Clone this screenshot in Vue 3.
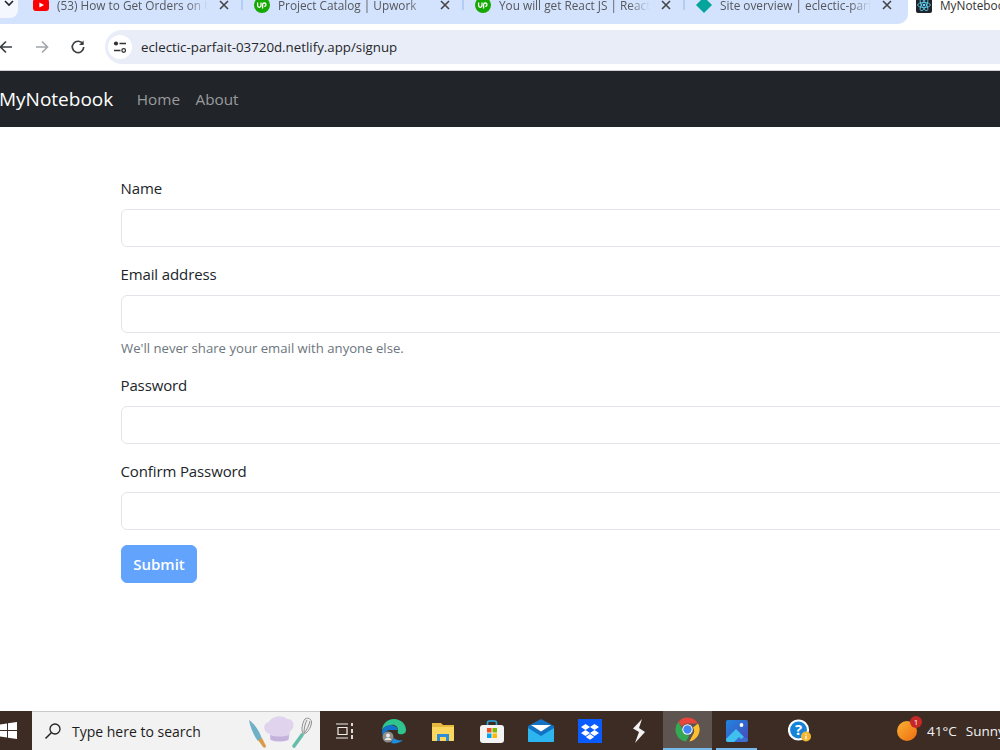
<script setup>
const tabs = [
  { title: '(53) How to Get Orders on Upwork', icon: 'yt' },
  { title: 'Project Catalog | Upwork', icon: 'up' },
  { title: 'You will get React JS | React Developer', icon: 'up' },
  { title: 'Site overview | eclectic-parfait', icon: 'net' },
]
const fields = [
  { label: 'Name' },
  { label: 'Email address', help: "We'll never share your email with anyone else." },
  { label: 'Password' },
  { label: 'Confirm Password' },
]
</script>

<template>
  <div class="screen">
    <div class="tabstrip">
      <div class="tabmenu">
        <svg width="12" height="10" viewBox="0 0 12 10"><path d="M2 1l4 4 4-4" fill="none" stroke="#222" stroke-width="1.6"/></svg>
      </div>
      <div class="tabs">
        <div v-for="(t, i) in tabs" :key="i" class="tab" :class="{ first: i === 0 }">
          <svg v-if="t.icon === 'yt'" class="fav" viewBox="0 0 16 16">
            <rect y="2" width="16" height="12" rx="3" fill="#f00"/>
            <path d="M6.4 5.4v5.2L11 8z" fill="#fff"/>
          </svg>
          <svg v-else-if="t.icon === 'up'" class="fav" viewBox="0 0 16 16">
            <circle cx="8" cy="8" r="8" fill="#14a800"/>
            <path d="M3.6 5.6v3a1.7 1.7 0 0 0 3.4 0v-3M8.6 11.6V7.4a1.7 1.7 0 1 1 1.6 2" fill="none" stroke="#fff" stroke-width="1.3"/>
          </svg>
          <svg v-else class="fav" viewBox="0 0 16 16">
            <path d="M8 0l8 8-8 8-8-8z" fill="#05a59c"/>
          </svg>
          <span class="tabtitle">{{ t.title }}</span>
          <svg class="close" viewBox="0 0 10 10"><path d="M1 1l8 8M9 1l-8 8" stroke="#444" stroke-width="1.6"/></svg>
        </div>
      </div>
      <div class="activetab">
        <svg class="fav" viewBox="0 0 16 16">
          <rect width="16" height="16" rx="2" fill="#20232a"/>
          <circle cx="8" cy="8" r="1.3" fill="#61dafb"/>
          <g fill="none" stroke="#61dafb" stroke-width=".8">
            <ellipse cx="8" cy="8" rx="6.4" ry="2.5"/>
            <ellipse cx="8" cy="8" rx="6.4" ry="2.5" transform="rotate(60 8 8)"/>
            <ellipse cx="8" cy="8" rx="6.4" ry="2.5" transform="rotate(120 8 8)"/>
          </g>
        </svg>
        <span class="activetitle">MyNotebook</span>
      </div>
    </div>

    <div class="toolbar">
      <svg class="tool back" viewBox="0 0 16 16"><path d="M14 8H2.5M8 2.5L2.5 8 8 13.5" fill="none" stroke="#3c4043" stroke-width="1.7"/></svg>
      <svg class="tool fwd" viewBox="0 0 16 16"><path d="M2 8h11.5M8 2.5L13.5 8 8 13.5" fill="none" stroke="#a3a6ab" stroke-width="1.7"/></svg>
      <svg class="tool reload" viewBox="0 0 16 16"><path d="M13 5.2A5.7 5.7 0 1 0 13.7 8" fill="none" stroke="#3c4043" stroke-width="1.7"/><path d="M13.6 1.4v4.6H9z" fill="#3c4043"/></svg>
      <div class="omnibox">
        <span class="siteinfo">
          <svg width="14" height="14" viewBox="0 0 14 14">
            <circle cx="3" cy="3.500" r="2.100" fill="#333"/>
            <path d="M6.500 3.500H13M1 10.500h6.500" stroke="#333" stroke-width="1.500"/>
            <circle cx="10.700" cy="10.500" r="1.800" fill="none" stroke="#333" stroke-width="1.300"/>
          </svg>
        </span>
        <span class="url">eclectic-parfait-03720d.netlify.app/signup</span>
      </div>
    </div>

    <nav class="navbar">
      <a class="brand">MyNotebook</a>
      <a class="navlink">Home</a>
      <a class="navlink">About</a>
    </nav>

    <main class="page">
      <form class="form" @submit.prevent>
        <div v-for="f in fields" :key="f.label" class="field">
          <label class="label">{{ f.label }}</label>
          <input class="input" type="text" />
          <div v-if="f.help" class="help">{{ f.help }}</div>
        </div>
        <button class="submit" type="submit">Submit</button>
      </form>
    </main>

    <footer class="taskbar">
      <div class="start">
        <svg width="17" height="17" viewBox="0 0 17 17"><path d="M0 2.4l7-1v6.500H0zM8 1.300L17 0v7.900H8zM0 9h7v6.500l-7-1zM8 9h9v8l-9-1.300z" fill="#fff"/></svg>
      </div>
      <div class="search">
        <svg class="lens" width="18" height="18" viewBox="0 0 18 18"><circle cx="11" cy="7" r="5" fill="none" stroke="#222" stroke-width="1.3"/><path d="M7.300 10.700L1.500 16.500" stroke="#222" stroke-width="1.500"/></svg>
        <span class="searchtext">Type here to search</span>
        <svg class="chef" width="66" height="36" viewBox="0 0 66 36">
          <path d="M0 7c5 3 11 12 13 19l-4 2C5 23 1 14 0 7z" fill="#6fb0c8"/>
          <path d="M9 27l4-2 4 8c.5 1.500-2 2.500-3 1z" fill="#d99a4a"/>
          <path d="M21 21c-7-1-8-11-1-12 2-6 14-8 18-3 7-1 9 9 3 12l-1 7c-6 2-13 2-18 0z" fill="#e0d3ee"/>
          <path d="M21 22c6 2 13 2 19 0l-.5 5c-6 2-12 2-18 0z" fill="#c4b2dc"/>
          <path d="M56 6c3-2 7 0 6.500 4-.5 5-5 11-8 11-3-3-1-12 1.500-15zM58 7c-2 3-3 9-3 13M61 8c-1 4-3 9-6 12" fill="#efeef0" stroke="#8e8e8e" stroke-width="1"/>
          <path d="M53 22l-8 11" stroke="#63bda9" stroke-width="3.600" stroke-linecap="round"/>
        </svg>
      </div>
      <div class="taskitems">
        <div class="cell">
          <svg width="18" height="16" viewBox="0 0 18 16" fill="none" stroke="#eee" stroke-width="1.200"><path d="M0 1h12M0 15h12"/><path d="M2 4.500h9v7H2z"/><path d="M16 0v3M16 6v4M16 12v4" stroke-width="1.800"/></svg>
        </div>
        <div class="cell">
          <svg width="26" height="26" viewBox="0 0 26 26">
            <path d="M1 13C1 6 6 1 13 1c7 0 12 5 12 11 0 4-4 5-7 4-2-1-1-3-1-4 0-3-3-6-7-5-5 1-9 3-9 6z" fill="#2fc48e"/>
            <path d="M1 13c1-4 5-6 9-6 4 0 7 3 7 5H9c-3 0-6 2-5 9-2-2-3-5-3-8z" fill="#1173c9"/>
            <path d="M10 25c4 1 9 0 12-3-3 1-7 0-9-2z" fill="#1c8fe0"/>
            <circle cx="7" cy="19" r="5.500" fill="#8e8e8e"/>
            <circle cx="7" cy="17.500" r="2" fill="#e8e8e8"/>
            <path d="M3.500 22c1-3 6-3 7 0z" fill="#e8e8e8"/>
          </svg>
        </div>
        <div class="cell">
          <svg width="24" height="22" viewBox="0 0 24 22">
            <path d="M1 3h9l2 2h11v15a1 1 0 0 1-1 1H2a1 1 0 0 1-1-1z" fill="#e8b93f"/>
            <path d="M1 7h22v13a1 1 0 0 1-1 1H2a1 1 0 0 1-1-1z" fill="#fbd75f"/>
            <path d="M6 21v-7h12v7h-3v-4H9v4z" fill="#2c8ed6"/>
          </svg>
        </div>
        <div class="cell">
          <svg width="24" height="24" viewBox="0 0 24 24">
            <path d="M7.500 7V4a2 2 0 0 1 2-2h5a2 2 0 0 1 2 2v3" fill="none" stroke="#29a8df" stroke-width="1.600"/>
            <rect y="6" width="24" height="18" rx="3" fill="#f3f3f3"/>
            <rect x="7" y="9" width="4.500" height="4.500" fill="#f25022"/>
            <rect x="12.500" y="9" width="4.500" height="4.500" fill="#7fba00"/>
            <rect x="7" y="14.500" width="4.500" height="4.500" fill="#00a4ef"/>
            <rect x="12.500" y="14.500" width="4.500" height="4.500" fill="#ffb900"/>
          </svg>
        </div>
        <div class="cell">
          <svg width="26" height="23" viewBox="0 0 26 23">
            <path d="M0 7l13-7 13 7v15a1 1 0 0 1-1 1H1a1 1 0 0 1-1-1z" fill="#1273c4"/>
            <path d="M0 9l13 8 13-8v13a1 1 0 0 1-1 1H1a1 1 0 0 1-1-1z" fill="#2cb5ee"/>
            <path d="M3 6h20L13 12.500z" fill="#fff"/>
          </svg>
        </div>
        <div class="cell">
          <svg width="24" height="24" viewBox="0 0 24 24">
            <rect width="24" height="24" fill="#0b5cff"/>
            <path d="M7.500 5L12 8 7.500 11 3 8zM16.500 5L21 8l-4.500 3L12 8zM7.500 11l4.500 3-4.500 3L3 14zM16.500 11l4.500 3-4.500 3L12 14zM7.800 18l4.200-3 4.200 3-4.200 2.800z" fill="#fff"/>
          </svg>
        </div>
        <div class="cell">
          <svg width="14" height="24" viewBox="0 0 14 24"><path d="M10 0L1 9.500 7 13 3 24l10-11-6-4z" fill="#f2f2f2"/></svg>
        </div>
        <div class="cell active">
          <svg width="25" height="25" viewBox="0 0 25 25">
            <path d="M12.500 0.500a12 12 0 0 1 10.400 6H12.500a6 6 0 0 0-5.500 3.600L3.400 4.800A12 12 0 0 1 12.500 0.500z" fill="#e8453c"/>
            <path d="M23 6.500a12 12 0 0 1-8.700 17.900l4-7.400a6 6 0 0 0-.3-6.500z" fill="#fbc02d"/>
            <path d="M3.400 4.800l5.300 9.200a6 6 0 0 0 5.600 4.500l-3.300 6A12 12 0 0 1 3.400 4.800z" fill="#34a853"/>
            <circle cx="12.500" cy="12.500" r="5.200" fill="#fff"/>
            <circle cx="12.500" cy="12.500" r="4.200" fill="#4285f4"/>
          </svg>
        </div>
        <div class="cell open">
          <svg width="22" height="22" viewBox="0 0 22 22">
            <defs><linearGradient id="ph" x1="0" y1="0" x2="1" y2="1"><stop offset="0" stop-color="#1f86e0"/><stop offset="1" stop-color="#4a47b8"/></linearGradient></defs>
            <rect width="22" height="22" rx="2" fill="url(#ph)"/>
            <circle cx="15.500" cy="5" r="1.900" fill="#fff"/>
            <path d="M0 19L10 9l8 8-4 5H2a2 2 0 0 1-2-2z" fill="#3fc0ef"/>
            <path d="M8 22l5-5 2 2 3-2 4 2v1a2 2 0 0 1-2 2z" fill="#3b6fcf"/>
          </svg>
        </div>
      </div>
      <div class="helpicon">
        <svg width="24" height="24" viewBox="0 0 24 24">
          <circle cx="10.500" cy="11" r="9.500" fill="#1683d8" stroke="#fff" stroke-width="2.200"/>
          <text x="10.500" y="16" text-anchor="middle" class="qmark">?</text>
          <circle cx="18" cy="17.500" r="5" fill="#f2b632"/>
          <path d="M18 14.800v1M18 16.800v3.500" stroke="#fff" stroke-width="1.300"/>
        </svg>
      </div>
      <div class="weather">
        <span class="sun">
          <span class="badge">1</span>
        </span>
        <span class="temp">41°C</span>
        <span class="sunny">Sunny</span>
      </div>
    </footer>
  </div>
</template>

<style>
html, body { margin: 0; padding: 0; background: #fff; }
</style>

<style scoped>
.screen {
  width: 1000px;
  height: 750px;
  overflow: hidden;
  display: flex;
  flex-direction: column;
  background: #fff;
  font-family: "Open Sans", "Noto Sans", sans-serif;
}

/* browser tabs */
.tabstrip {
  flex: none;
  height: 24px;
  display: flex;
  overflow: hidden;
  background: #fff;
  white-space: nowrap;
}
.tabmenu {
  flex: none;
  width: 18px;
  height: 18px;
  background: #f4f7fe;
  border-bottom-right-radius: 8px;
  display: flex;
  justify-content: center;
  align-items: flex-start;
  margin-right: -18px;
  position: relative;
  z-index: 1;
}
.tabs {
  flex: none;
  width: 908px;
  padding-left: 20px;
  box-sizing: border-box;
  height: 24px;
  display: flex;
  background: #d3e3fd;
  border-bottom-right-radius: 10px;
}
.tab {
  flex: none;
  width: 221px;
  height: 10px;
  box-sizing: border-box;
  padding-left: 11px;
  display: flex;
  align-items: center;
  border-left: 2px solid #b4cdf4;
  position: relative;
}
.tab.first { border-left-color: transparent; }
.fav { flex: none; width: 16px; height: 16px; }
.tabtitle {
  margin: -1px 0 0 8px;
  width: 151px;
  overflow: hidden;
  font-size: 11.8px;
  color: #55575b;
  -webkit-mask-image: linear-gradient(to right, #000 86%, transparent);
  mask-image: linear-gradient(to right, #000 86%, transparent);
}
.close { flex: none; width: 10px; height: 10px; margin-left: 11px; }
.activetab {
  flex: none;
  height: 10px;
  padding-left: 8px;
  display: flex;
  align-items: center;
}
.activetitle { margin: -1px 0 0 8px; font-size: 11.8px; color: #333; }

/* toolbar */
.toolbar {
  flex: none;
  height: 47px;
  box-sizing: border-box;
  border-bottom: 1px solid #d0d0d0;
  padding: 6px 0;
  display: flex;
  align-items: center;
  background: #fff;
}
.tool { flex: none; width: 16px; height: 16px; }
.back { margin-left: -2px; }
.fwd { margin-left: 20px; }
.reload { margin-left: 20px; }
.omnibox {
  flex: none;
  width: 960px;
  height: 34px;
  margin-left: 19px;
  padding-left: 3px;
  box-sizing: border-box;
  background: #e9edf7;
  border-radius: 17px;
  display: flex;
  align-items: center;
}
.siteinfo {
  flex: none;
  width: 24px;
  height: 24px;
  border-radius: 50%;
  background: #fff;
  display: flex;
  align-items: center;
  justify-content: center;
}
.url { margin-left: 9px; font-size: 13.3px; color: #25272a; white-space: nowrap; }

/* navbar */
.navbar {
  flex: none;
  height: 56px;
  background: #212529;
  display: flex;
  align-items: center;
}
.brand { font-size: 19px; color: #fff; margin-left: -1px; margin-right: 23.5px; }
.navlink { font-size: 15.3px; color: #999b9e; margin-right: 15.5px; }

/* form */
.page { flex: 1; min-height: 0; padding: 50px 0 0 121px; overflow: hidden; background: #fff; }
.form { width: 1200px; }
.field { display: flex; flex-direction: column; padding-bottom: 16px; }
.label {
  display: block;
  font-size: 15px;
  letter-spacing: -0.12px;
  line-height: 23px;
  margin: 0 0 9px -0.5px;
  color: #212529;
}
.input {
  display: block;
  width: 100%;
  height: 37.5px;
  margin-bottom: 0.5px;
  box-sizing: border-box;
  border: 1px solid #e2e5e9;
  border-radius: 6px;
  background: #fff;
  padding: 6px 12px;
}
.help { margin-top: 5px; font-size: 13.15px; line-height: 20px; color: #6c757d; }
.submit {
  display: block;
  width: 76px;
  height: 38px;
  margin-top: -1px;
  border: 1px solid #62a3fd;
  border-radius: 6px;
  background: #62a3fd;
  color: #fff;
  font-family: inherit;
  font-size: 15px;
  font-weight: 600;
  padding: 0;
}

/* taskbar */
.taskbar {
  flex: none;
  height: 39px;
  background: #3c2c24;
  display: flex;
  align-items: stretch;
  color: #fff;
  white-space: nowrap;
}
.start { flex: none; width: 32px; display: flex; align-items: center; }
.search {
  flex: none;
  width: 288px;
  box-sizing: border-box;
  background: #f2f2f2;
  border-top: 1px solid #c8c8c8;
  display: flex;
  align-items: center;
  padding-left: 12px;
}
.lens { flex: none; }
.searchtext { margin-left: 10px; font-size: 14px; color: #1c1c1c; width: 178px; }
.chef { flex: none; margin-left: -1px; }
.taskitems { flex: none; display: flex; }
.cell {
  flex: none;
  width: 49px;
  display: flex;
  align-items: center;
  justify-content: center;
  box-sizing: border-box;
  position: relative;
}
.cell.active { background: #5f5550; border-bottom: 2px solid #76b9ed; }
.cell.open::after {
  content: "";
  position: absolute;
  left: 4px;
  right: 4px;
  bottom: 0;
  height: 2px;
  background: #76b9ed;
}
.helpicon { flex: none; margin-left: 27px; width: 24px; display: flex; align-items: center; }
.qmark { font-family: "Open Sans", sans-serif; font-size: 15px; font-weight: 700; fill: #fff; }
.weather { flex: none; display: flex; align-items: center; margin-left: 85px; }
.sun {
  flex: none;
  position: relative;
  width: 20px;
  height: 20px;
  border-radius: 50%;
  background: linear-gradient(135deg, #f9b233, #f06c10);
}
.badge {
  position: absolute;
  top: -5px;
  right: -5px;
  width: 12px;
  height: 12px;
  border-radius: 50%;
  background: #c62828;
  color: #fff;
  font-size: 8px;
  line-height: 12px;
  text-align: center;
}
.temp { margin-left: 10px; font-size: 13.5px; color: #f2f2f2; }
.sunny { margin-left: 9px; font-size: 13.5px; color: #f2f2f2; }
</style>
